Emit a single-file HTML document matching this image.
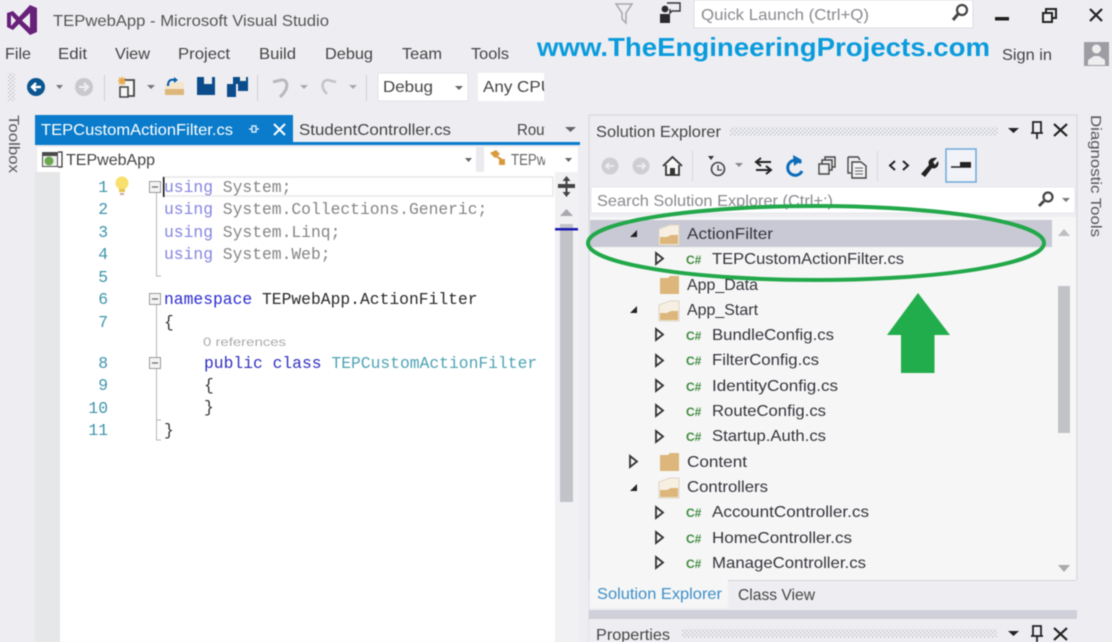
<!DOCTYPE html>
<html><head><meta charset="utf-8"><style>
html,body{margin:0;padding:0;background:#eeeef2;width:1112px;height:642px;overflow:hidden}
svg{display:block;filter:blur(.55px)}
text{font-family:"Liberation Sans",sans-serif;fill:#444}
.u{font-size:16px;fill:#444}
.c{font-family:"Liberation Mono",monospace;font-size:16.33px}
.n{font-family:"Liberation Mono",monospace;font-size:16.33px;fill:#3d95ad;text-anchor:end}
.t{font-size:16px;fill:#34343c}
.cs{font-size:12px;font-weight:bold;fill:#3f8a3f}
</style></head><body>
<svg width="1112" height="642" viewBox="0 0 1112 642" xmlns="http://www.w3.org/2000/svg">
<defs>
<pattern id="g" width="4" height="4" patternUnits="userSpaceOnUse"><rect width="1.5" height="1.5" fill="#c4c5cc"/><rect x="2" y="2" width="1.5" height="1.5" fill="#c4c5cc"/></pattern>
<path id="tri" d="M0 0L7 5.5 0 11Z" fill="#f6f6f6" stroke="#333" stroke-width="1.8"/>
<path id="exp" d="M7 0V7H0Z" fill="#222"/>
<g id="fopen"><path d="M1 5L12 1H21V21H1Z" fill="#f7f0e2" stroke="#ddd6c6"/><path d="M2 13H9L13 11H20V20H2Z" fill="#dcb67a"/></g>
<path id="fclosed" d="M1 3H9L11 1H20V19H1Z" fill="#dcb67a"/>
</defs>
<rect width="1112" height="642" fill="#eeeef2"/>

<!-- title bar -->
<path fill="#68217a" fill-rule="evenodd" d="M7 13L13 11 19 17 30 5 37 8V32L30 35 19 24 13 30 7 27ZM11 15V26L16 20.5ZM30 13V28L22 20.5Z"/>
<text x="53" y="26" textLength="276" lengthAdjust="spacingAndGlyphs" style="font-size:16px;fill:#555">TEPwebApp - Microsoft Visual Studio</text>
<path d="M616 4H632L626 13V23L622 19V13Z" fill="none" stroke="#a8a8ac" stroke-width="1.5"/>
<g fill="#2a2a2e"><circle cx="665" cy="9" r="3.4"/><path d="M660 14H670V23H660Z"/></g><path d="M667 3H680V11H672L670 13V9" fill="none" stroke="#333" stroke-width="1.4"/>
<rect x="694" y="0" width="279" height="28" fill="#fff" stroke="#dcdce2"/>
<text x="701" y="20" style="font-size:16px;fill:#8a8a90" textLength="168" lengthAdjust="spacingAndGlyphs">Quick Launch (Ctrl+Q)</text>
<circle cx="962" cy="10" r="5" fill="none" stroke="#444" stroke-width="2.2"/><path d="M958 14L953 20" stroke="#444" stroke-width="3"/>
<rect x="995" y="17" width="14" height="3.5" fill="#1e1e1e"/>
<path d="M1043 13H1052V22H1043ZM1046 13V9H1056V18H1052" fill="none" stroke="#222" stroke-width="2"/>
<path d="M1090 9L1102 21M1102 9L1090 21" stroke="#222" stroke-width="2.2"/>

<!-- menu -->
<text x="5" y="59" class="u" textLength="26" lengthAdjust="spacingAndGlyphs">File</text>
<text x="58" y="59" class="u" textLength="29" lengthAdjust="spacingAndGlyphs">Edit</text>
<text x="115" y="59" class="u" textLength="35" lengthAdjust="spacingAndGlyphs">View</text>
<text x="178" y="59" class="u" textLength="52" lengthAdjust="spacingAndGlyphs">Project</text>
<text x="259" y="59" class="u" textLength="37" lengthAdjust="spacingAndGlyphs">Build</text>
<text x="325" y="59" class="u" textLength="48" lengthAdjust="spacingAndGlyphs">Debug</text>
<text x="402" y="59" class="u" textLength="40" lengthAdjust="spacingAndGlyphs">Team</text>
<text x="471" y="59" class="u" textLength="38" lengthAdjust="spacingAndGlyphs">Tools</text>
<text x="1002" y="60" class="u" textLength="50" lengthAdjust="spacingAndGlyphs">Sign in</text>
<rect x="1084" y="42" width="25" height="24" fill="#9d9da3"/><circle cx="1096.5" cy="49" r="4.5" fill="#eee"/><path d="M1088 65V60L1094 56H1099L1105 60V65Z" fill="#eee"/>
<text x="537" y="56" textLength="453" lengthAdjust="spacingAndGlyphs" style="font-size:26px;font-weight:bold;fill:#0a9bdc">www.TheEngineeringProjects.com</text>

<!-- main toolbar -->
<rect x="8" y="73" width="7" height="28" fill="url(#g)"/>
<circle cx="36" cy="87" r="9" fill="#0b5590"/><path d="M41 87H33M36 83L32 87 36 91" stroke="#fff" stroke-width="2.4" fill="none"/>
<path d="M56 85H63L59.5 89Z" fill="#777"/>
<circle cx="84" cy="87" r="9" fill="#c9c9cd"/><path d="M79 87H87M84 83L88 87 84 91" stroke="#eee" stroke-width="2.2" fill="none"/>
<rect x="104" y="75" width="1" height="26" fill="#d0d0d6"/>
<path d="M124 80H134V96H128" fill="#f6f6f6" stroke="#444" stroke-width="1.8"/>
<path d="M120 87H128V97H120Z" fill="#f6f6f6" stroke="#444" stroke-width="1.6"/>
<path d="M122 77V85M118 81H126M119 78L125 84M125 78L119 84" stroke="#e8a94a" stroke-width="1.6"/>
<path d="M147 85H155L151 89Z" fill="#777"/>
<path d="M165 84H171L174 82H184V95H165Z" fill="#f3e6cc"/><path d="M165 89H184V95H165Z" fill="#dcb67a"/><path d="M168 86C168 80 171 79 175 80" fill="none" stroke="#0b5fa5" stroke-width="2.2"/><path d="M174 77L178 80 174 83Z" fill="#0b5fa5"/>
<path d="M197 77H215V95H197Z" fill="#0b4d8c"/><rect x="204" y="77" width="8" height="7" fill="#eee"/>
<path d="M227 84H236V97H227ZM233 77H248V91H238V84H233Z" fill="#0b4d8c"/><rect x="240" y="77" width="6" height="4" fill="#eee"/>
<rect x="257" y="75" width="1" height="26" fill="#d0d0d6"/>
<path d="M273 82L281 80C288 79 290 88 280 97" fill="none" stroke="#b9b9be" stroke-width="3"/>
<path d="M300 85H308L304 89Z" fill="#aaa"/>
<path d="M336 82L328 80C322 80 320 87 327 94" fill="none" stroke="#c4c4c8" stroke-width="2.5"/>
<path d="M349 85H357L353 89Z" fill="#aaa"/>
<rect x="366" y="75" width="1" height="26" fill="#d0d0d6"/>
<rect x="378" y="73" width="90" height="28" fill="#fff" stroke="#e2e2e6"/>
<text x="383" y="92" class="u" textLength="50" lengthAdjust="spacingAndGlyphs">Debug</text>
<path d="M455 86H463L459 90Z" fill="#666"/>
<rect x="478" y="73" width="66" height="28" fill="#fff"/>
<text x="483" y="92" class="u" textLength="70" lengthAdjust="spacingAndGlyphs">Any CPU</text>
<rect x="544" y="72" width="14" height="30" fill="#eeeef2"/>

<!-- left toolbox -->
<text transform="translate(9,115) rotate(90)" style="font-size:15px;fill:#555" textLength="58" lengthAdjust="spacingAndGlyphs">Toolbox</text>
<text transform="translate(1091,115) rotate(90)" style="font-size:15px;fill:#555" textLength="122" lengthAdjust="spacingAndGlyphs">Diagnostic Tools</text>

<!-- document tabs -->
<rect x="35" y="115" width="258" height="29" fill="#0a7ccb"/>
<rect x="35" y="142" width="545" height="3" fill="#0a7ccb"/>
<text x="41" y="135" textLength="192" lengthAdjust="spacingAndGlyphs" style="font-size:16px;fill:#fff">TEPCustomActionFilter.cs</text>
<path d="M249 129H252M256 129H259M252 126H256V132H252Z" fill="none" stroke="#d7e9f6" stroke-width="1.4"/>
<path d="M274 124L285 135M285 124L274 135" stroke="#fff" stroke-width="2"/>
<text x="299" y="135" class="u" textLength="152" lengthAdjust="spacingAndGlyphs">StudentController.cs</text>
<text x="517" y="135" class="u" textLength="40" lengthAdjust="spacingAndGlyphs">Route</text>
<rect x="545" y="115" width="18" height="27" fill="#eeeef2"/>
<path d="M565 127H576L570.5 132Z" fill="#666"/>

<!-- nav bar -->
<rect x="36" y="145" width="543" height="27" fill="#eaeaef"/>
<rect x="37" y="147" width="439" height="25" fill="#fff"/>
<rect x="484" y="147" width="94" height="25" fill="#fff"/>
<rect x="42" y="152" width="16" height="15" fill="#4a4a4a"/><rect x="43" y="156" width="14" height="10" fill="#eee"/><circle cx="49" cy="161" r="4.5" fill="#6aa84f"/><path d="M58 152H62V167H58" fill="none" stroke="#333" stroke-width="1.2"/>
<text x="66" y="165" class="u" textLength="89" lengthAdjust="spacingAndGlyphs">TEPwebApp</text>
<path d="M465 158H472L468.5 162Z" fill="#666"/>
<path d="M490 153L496 150 500 154 495 158ZM499 159H505V165H499Z" fill="#d99a3e"/><path d="M496 156L502 160" stroke="#d99a3e" stroke-width="2"/>
<text x="511" y="165" textLength="50" lengthAdjust="spacingAndGlyphs" style="font-size:16px;fill:#666">TEPweb</text>
<rect x="545" y="147" width="18" height="25" fill="#fff"/>
<path d="M565 158H572L568.5 162Z" fill="#666"/>

<!-- editor -->
<rect x="35" y="172" width="544" height="470" fill="#fff"/>
<rect x="35" y="172" width="25" height="470" fill="#e6e7e8"/>
<rect x="163" y="177" width="390" height="19" fill="none" stroke="#e8e8e8" stroke-width="1.5"/>
<g>
<text x="108" y="192" class="n">1</text><text x="108" y="214" class="n">2</text><text x="108" y="237" class="n">3</text><text x="108" y="259" class="n">4</text><text x="108" y="282" class="n">5</text><text x="108" y="304" class="n">6</text><text x="108" y="327" class="n">7</text><text x="108" y="368" class="n">8</text><text x="108" y="390" class="n">9</text><text x="108" y="413" class="n">10</text><text x="108" y="435" class="n">11</text>
</g>
<circle cx="122" cy="183" r="6.5" fill="#f9df6b"/><rect x="119" y="189" width="6" height="3" fill="#e3c54e"/><rect x="120" y="193" width="4" height="2" fill="#c9a8a0"/>
<g fill="#f4f4f4" stroke="#999" stroke-width="1"><rect x="149.5" y="181.5" width="11" height="11"/><rect x="149.5" y="293.5" width="11" height="11"/><rect x="149.5" y="357.5" width="11" height="11"/></g>
<path d="M152 187H158M152 299H158M152 363H158" stroke="#666" stroke-width="1.2"/>
<path d="M156.5 193V276H161M156.5 305V357M156.5 369V440H161M156.5 420H161" fill="none" stroke="#b5b5b5" stroke-width="1"/>
<rect x="163" y="177" width="1.5" height="20" fill="#111"/>
<text x="164" y="192" class="c"><tspan fill="#8585e0">using</tspan><tspan fill="#858585"> System;</tspan></text>
<text x="164" y="214" class="c"><tspan fill="#8585e0">using</tspan><tspan fill="#858585"> System.Collections.Generic;</tspan></text>
<text x="164" y="237" class="c"><tspan fill="#8585e0">using</tspan><tspan fill="#858585"> System.Linq;</tspan></text>
<text x="164" y="259" class="c"><tspan fill="#8585e0">using</tspan><tspan fill="#858585"> System.Web;</tspan></text>
<text x="164" y="304" class="c"><tspan fill="#2b2bd0">namespace</tspan><tspan fill="#2a2a2a"> TEPwebApp.ActionFilter</tspan></text>
<text x="164" y="327" class="c" style="fill:#333">{</text>
<text x="203" y="346" style="font-size:12px;fill:#aaa" textLength="83" lengthAdjust="spacingAndGlyphs">0 references</text>
<text x="204" y="368" class="c"><tspan fill="#3030c0">public class</tspan><tspan fill="#4fa3b3"> TEPCustomActionFilter</tspan></text>
<text x="204" y="390" class="c" style="fill:#333">{</text>
<text x="204" y="412" class="c" style="fill:#333">}</text>
<text x="164" y="435" class="c" style="fill:#333">}</text>

<!-- editor scrollbar -->
<rect x="555" y="172" width="24" height="470" fill="#f1f1f4"/>
<rect x="560" y="224" width="13" height="278" fill="#c2c3c9"/>
<path d="M566.5 178V196" stroke="#444" stroke-width="2"/><rect x="558" y="184" width="17" height="4" fill="#444"/>
<path d="M566.5 176L562.5 181H570.5ZM566.5 197L562.5 192H570.5Z" fill="#444"/>
<path d="M560 216L566.5 209 573 216Z" fill="#a8a8ad"/>
<rect x="555" y="228" width="23" height="2.5" fill="#1a1ab0"/>

<!-- solution explorer panel -->
<rect x="589" y="115" width="488" height="527" fill="#eeeef2" stroke="#d4d4da"/>
<text x="596" y="137" class="u" textLength="125" lengthAdjust="spacingAndGlyphs">Solution Explorer</text>
<rect x="730" y="127" width="268" height="9" fill="url(#g)"/>
<path d="M1008 128H1019L1013.5 133Z" fill="#222"/>
<path d="M1033 122H1041V133H1033ZM1031 133H1043M1037 133V139" fill="none" stroke="#222" stroke-width="1.8"/>
<path d="M1054 124L1067 136M1067 124L1054 136" stroke="#222" stroke-width="2.2"/>

<circle cx="610" cy="166" r="8.5" fill="#cfcfd3"/><path d="M614 166H607M609 163L606 166 609 169" stroke="#eee" stroke-width="1.8" fill="none"/>
<circle cx="641" cy="166" r="8.5" fill="#cfcfd3"/><path d="M637 166H644M642 163L645 166 642 169" stroke="#eee" stroke-width="1.8" fill="none"/>
<path d="M663 166L672.5 157 682 166M666 165V175H679V165" fill="#f8f8f8" stroke="#333" stroke-width="1.8"/><rect x="670" y="168" width="5" height="7" fill="#333"/>
<rect x="692" y="151" width="1" height="30" fill="#d6d6dc"/>
<path d="M708 156H714L711 160Z" fill="#333"/><circle cx="718" cy="169" r="6.5" fill="none" stroke="#444" stroke-width="1.6"/><path d="M718 165V170H722" fill="none" stroke="#444" stroke-width="1.3"/>
<path d="M735 163H743L739 167Z" fill="#888"/>
<path d="M771 162H757M761 158L756 162 761 166M756 170H770M766 166L771 170 766 174" fill="none" stroke="#222" stroke-width="2"/>
<path d="M801 163A7.5 7.5 0 1 0 802 171" fill="none" stroke="#0b6cb8" stroke-width="3"/><path d="M793 155L802 160 794 166Z" fill="#0b6cb8"/>
<path d="M819 164H829V174H819ZM822 164V160H832V170H829M825 160V157H835V167H832" fill="none" stroke="#444" stroke-width="1.4"/>
<path d="M848 157H858L860 160M848 157V173H851M852 162H861L866 166V178H852Z" fill="#f3f3f5" stroke="#444" stroke-width="1.4"/><path d="M855 168H863M855 171H863M855 174H863" stroke="#666"/>
<rect x="877" y="151" width="1" height="30" fill="#d6d6dc"/>
<path d="M895 161L890 165.5 895 170M903 161L908 165.5 903 170" fill="none" stroke="#222" stroke-width="2"/>
<path d="M921 174L929 165C927 160 932 157 937 158L933 162 935 165 938 161C940 165 936 170 932 168L925 177Z" fill="#222"/>
<rect x="946" y="149" width="30" height="33" fill="#f2f3f8" stroke="#6fa8d8" stroke-width="1.5"/>
<path d="M951 167H971" stroke="#222" stroke-width="1.5"/><rect x="960" y="162" width="11" height="5" fill="#222"/>

<rect x="591" y="187" width="484" height="26" fill="#fff" stroke="#e6e6ea"/>
<text x="597" y="206" style="font-size:16px;fill:#8a8a90" textLength="236" lengthAdjust="spacingAndGlyphs">Search Solution Explorer (Ctrl+;)</text>
<circle cx="1048" cy="197" r="4.5" fill="none" stroke="#444" stroke-width="2.2"/><path d="M1044 201L1039 206" stroke="#444" stroke-width="2.8"/>
<path d="M1062 198H1070L1066 202Z" fill="#777"/>

<!-- tree -->
<rect x="590" y="217" width="486" height="363" fill="#f6f6f6"/>
<rect x="590" y="220" width="462" height="27" fill="#c9c9d5"/>
<rect x="1058" y="286" width="12" height="147" fill="#c2c3c9"/>
<path d="M1058 236L1064 229 1070 236Z" fill="#bdbdc2"/>
<path d="M1058 565L1064 572 1070 565Z" fill="#aaa"/>

<use href="#exp" x="630" y="230"/>
<use href="#fopen" x="658" y="224"/>
<text x="687" y="239" class="t" textLength="86" lengthAdjust="spacingAndGlyphs">ActionFilter</text>

<use href="#tri" x="656" y="253"/>
<text x="686" y="264" class="cs">C#</text>
<text x="712" y="264" class="t" textLength="192" lengthAdjust="spacingAndGlyphs">TEPCustomActionFilter.cs</text>

<use href="#fclosed" x="659" y="275"/>
<text x="687" y="290" class="t" textLength="71" lengthAdjust="spacingAndGlyphs">App_Data</text>

<use href="#exp" x="630" y="306"/>
<use href="#fopen" x="658" y="300"/>
<text x="687" y="315" class="t" textLength="71" lengthAdjust="spacingAndGlyphs">App_Start</text>

<use href="#tri" x="656" y="329"/>
<text x="686" y="340" class="cs">C#</text>
<text x="712" y="340" class="t" textLength="122" lengthAdjust="spacingAndGlyphs">BundleConfig.cs</text>

<use href="#tri" x="656" y="355"/>
<text x="686" y="365" class="cs">C#</text>
<text x="712" y="365" class="t" textLength="107" lengthAdjust="spacingAndGlyphs">FilterConfig.cs</text>

<use href="#tri" x="656" y="380"/>
<text x="686" y="391" class="cs">C#</text>
<text x="712" y="391" class="t" textLength="126" lengthAdjust="spacingAndGlyphs">IdentityConfig.cs</text>

<use href="#tri" x="656" y="405"/>
<text x="686" y="416" class="cs">C#</text>
<text x="712" y="416" class="t" textLength="114" lengthAdjust="spacingAndGlyphs">RouteConfig.cs</text>

<use href="#tri" x="656" y="431"/>
<text x="686" y="441" class="cs">C#</text>
<text x="712" y="441" class="t" textLength="114" lengthAdjust="spacingAndGlyphs">Startup.Auth.cs</text>

<use href="#tri" x="630" y="456"/>
<use href="#fclosed" x="659" y="452"/>
<text x="687" y="467" class="t" textLength="60" lengthAdjust="spacingAndGlyphs">Content</text>

<use href="#exp" x="630" y="484"/>
<use href="#fopen" x="658" y="477"/>
<text x="687" y="492" class="t" textLength="81" lengthAdjust="spacingAndGlyphs">Controllers</text>

<use href="#tri" x="656" y="507"/>
<text x="686" y="517" class="cs">C#</text>
<text x="712" y="517" class="t" textLength="157" lengthAdjust="spacingAndGlyphs">AccountController.cs</text>

<use href="#tri" x="656" y="532"/>
<text x="686" y="543" class="cs">C#</text>
<text x="712" y="543" class="t" textLength="140" lengthAdjust="spacingAndGlyphs">HomeController.cs</text>

<use href="#tri" x="656" y="557"/>
<text x="686" y="568" class="cs">C#</text>
<text x="712" y="568" class="t" textLength="154" lengthAdjust="spacingAndGlyphs">ManageController.cs</text>

<!-- bottom tabs -->
<rect x="589" y="580" width="489" height="62" fill="#eeeef2"/>
<rect x="590" y="580" width="486" height="1" fill="#d4d4da"/>
<rect x="590" y="580" width="138" height="28" fill="#f6f6f6"/>
<text x="597" y="599" style="font-size:16px;fill:#3f8fc8" textLength="125" lengthAdjust="spacingAndGlyphs">Solution Explorer</text>
<text x="738" y="600" class="u" textLength="77" lengthAdjust="spacingAndGlyphs">Class View</text>
<rect x="589" y="610" width="488" height="9" fill="#cfd0da"/>
<text x="596" y="640" class="u" textLength="74" lengthAdjust="spacingAndGlyphs">Properties</text>
<rect x="682" y="629" width="315" height="9" fill="url(#g)"/>
<path d="M1008 631H1019L1013.5 636Z" fill="#222"/>
<path d="M1033 626H1041V636H1033ZM1031 636H1043M1037 636V642" fill="none" stroke="#222" stroke-width="1.8"/>
<path d="M1054 628L1067 640M1067 628L1054 640" stroke="#222" stroke-width="2.2"/>

<!-- annotations -->
<ellipse cx="816" cy="243" rx="228" ry="37" fill="none" stroke="#22a84a" stroke-width="4"/>
<path d="M918 293L950 335H934.5V373H901V335H887Z" fill="#22ad4c"/>
</svg>
</body></html>
